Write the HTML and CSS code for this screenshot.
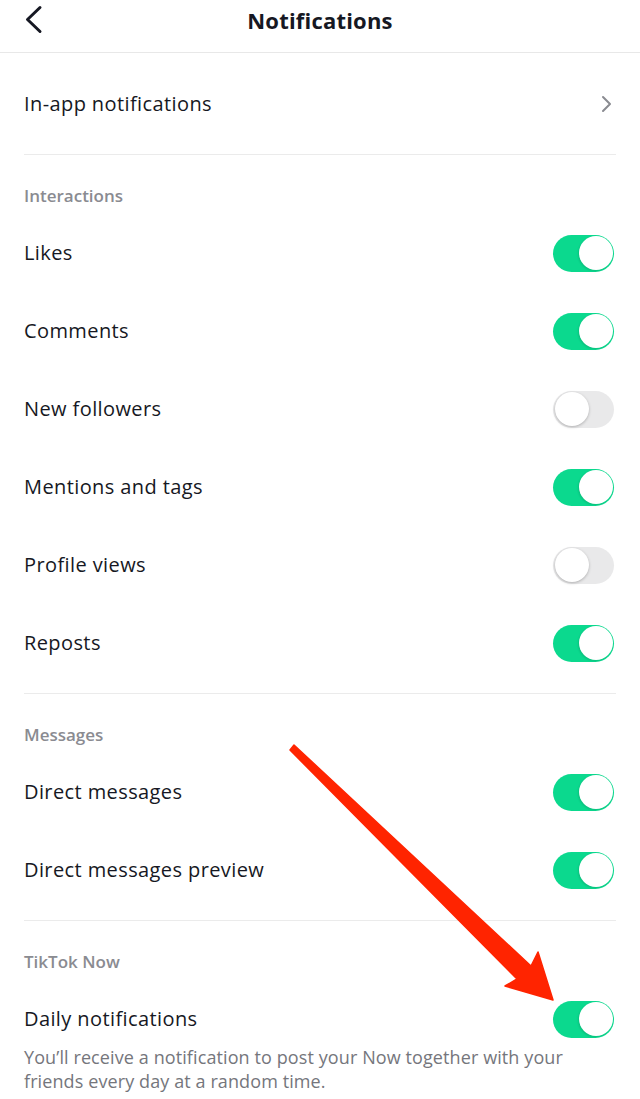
FILE: index.html
```html
<!DOCTYPE html>
<html lang="en">
<head>
<meta charset="utf-8">
<title>Notifications</title>
<link rel="stylesheet" href="styles.css">
</head>
<body>
<div class="screen">
  <header class="topbar">
    <button class="back" aria-label="Back">
      <svg width="20" height="30" viewBox="0 0 20 30"><polyline points="16,2.5 3.5,14.5 16,26.5" fill="none" stroke="#161823" stroke-width="3" stroke-linecap="round" stroke-linejoin="round"/></svg>
    </button>
    <h1 class="title">Notifications</h1>
  </header>

  <div class="link-row">
    <span class="label">In-app notifications</span>
    <svg class="chev" width="12" height="18" viewBox="0 0 12 18"><polyline points="2,2 9,9 2,16" fill="none" stroke="#8a8b91" stroke-width="2" stroke-linecap="round" stroke-linejoin="round"/></svg>
  </div>

  <section class="group">
    <h2 class="group-title">Interactions</h2>
    <div class="row"><span class="label">Likes</span><span class="switch on"></span></div>
    <div class="row"><span class="label">Comments</span><span class="switch on"></span></div>
    <div class="row"><span class="label">New followers</span><span class="switch"></span></div>
    <div class="row"><span class="label">Mentions and tags</span><span class="switch on"></span></div>
    <div class="row"><span class="label">Profile views</span><span class="switch"></span></div>
    <div class="row"><span class="label">Reposts</span><span class="switch on"></span></div>
  </section>

  <section class="group">
    <h2 class="group-title">Messages</h2>
    <div class="row"><span class="label">Direct messages</span><span class="switch on"></span></div>
    <div class="row"><span class="label">Direct messages preview</span><span class="switch on"></span></div>
  </section>

  <section class="group last">
    <h2 class="group-title">TikTok Now</h2>
    <div class="row compact"><span class="label">Daily notifications</span><span class="switch on"></span></div>
    <p class="hint">You’ll receive a notification to post your Now together with your friends every day at a random time.</p>
  </section>

  <svg class="pointer" width="640" height="1099" viewBox="0 0 640 1099">
    <polygon points="290,750 294,745 531,966 538,952 553,1000 505,986 517,979" fill="#ff2400" stroke="#ff2400" stroke-width="1.5" stroke-linejoin="round"/>
  </svg>
</div>
</body>
</html>
```

FILE: styles.css
```css
* { box-sizing: border-box; }

html, body {
  margin: 0;
  padding: 0;
  background: #ffffff;
}

body {
  font-family: "Open Sans", "Liberation Sans", sans-serif;
  color: #161823;
}

.screen {
  position: relative;
  width: 640px;
  height: 1099px;
  overflow: hidden;
}

.topbar {
  position: relative;
  height: 53px;
  border-bottom: 1px solid #e8e8e8;
  display: flex;
  justify-content: center;
}

.back {
  position: absolute;
  left: 24px;
  top: 5px;
  padding: 0;
  border: 0;
  background: none;
  display: flex;
}

.title {
  margin: 0;
  font-size: 22px;
  font-weight: 700;
  line-height: 40px;
  letter-spacing: 0.2px;
}

.link-row {
  height: 101px;
  margin: 0 24px;
  display: flex;
  align-items: center;
  justify-content: space-between;
}

.link-row .chev { margin-right: 3px; }

.label {
  font-size: 20px;
  line-height: 24px;
  letter-spacing: 0.4px;
}

.group {
  margin: 0 24px;
  border-top: 1px solid #ebebeb;
  padding: 31px 0 11px;
}

.group.last { padding-bottom: 0; }

.group-title {
  margin: 0 0 8px;
  font-size: 17px;
  font-weight: 600;
  line-height: 20px;
  color: #8a8b91;
}

.row {
  height: 78px;
  display: flex;
  align-items: center;
  justify-content: space-between;
}

.row.compact {
  height: 50px;
  margin-top: 22px;
}

.hint {
  margin: 1px 0 0;
  font-size: 18px;
  line-height: 24px;
  letter-spacing: 0.1px;
  color: #75767c;
  max-width: 560px;
}

.switch {
  position: relative;
  width: 61px;
  height: 37px;
  border-radius: 19px;
  background: #e9e9ea;
  margin-right: 2px;
  flex: none;
}

.switch::after {
  content: "";
  position: absolute;
  top: 1.5px;
  left: 1.5px;
  width: 34px;
  height: 34px;
  border-radius: 50%;
  background: #ffffff;
  box-shadow: 0 1px 3px rgba(0, 0, 0, 0.25);
}

.switch.on { background: #0bd98e; }

.switch.on::after {
  left: auto;
  right: 1.5px;
  box-shadow: -1px 1px 2px rgba(0, 0, 0, 0.12);
}

.pointer {
  position: absolute;
  left: 0;
  top: 0;
  pointer-events: none;
}
```
